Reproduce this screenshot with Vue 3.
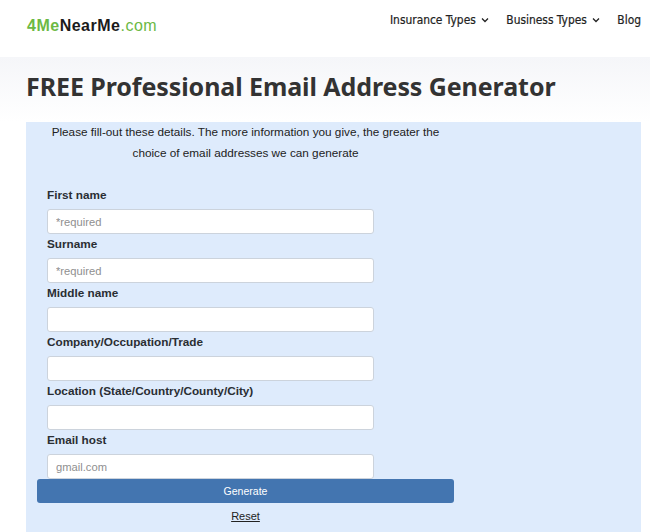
<script setup>
const fields = [
  { label: 'First name', placeholder: '*required' },
  { label: 'Surname', placeholder: '*required' },
  { label: 'Middle name', placeholder: '' },
  { label: 'Company/Occupation/Trade', placeholder: '' },
  { label: 'Location (State/Country/County/City)', placeholder: '' },
  { label: 'Email host', placeholder: 'gmail.com' },
]
</script>

<template>
  <div class="page">
    <header class="top">
      <div class="logo"><span class="g">4Me</span><span class="k">NearMe</span><span class="g dot">.com</span></div>
      <nav class="nav">
        <a class="item">Insurance Types
          <svg class="chev" width="8" height="6" viewBox="0 0 8 6"><path d="M1 1.5 L4 4.5 L7 1.5" fill="none" stroke="#222" stroke-width="1.3"/></svg>
        </a>
        <a class="item">Business Types
          <svg class="chev" width="8" height="6" viewBox="0 0 8 6"><path d="M1 1.5 L4 4.5 L7 1.5" fill="none" stroke="#222" stroke-width="1.3"/></svg>
        </a>
        <a class="item">Blog</a>
      </nav>
    </header>
    <section class="band">
      <h1>FREE Professional Email Address Generator</h1>
    </section>
    <main class="panel">
      <div class="narrow">
        <p class="intro">Please fill-out these details. The more information you give, the greater the<br>choice of email addresses we can generate</p>
        <form class="form" @submit.prevent>
          <div v-for="f in fields" :key="f.label" class="field">
            <label class="label">{{ f.label }}</label>
            <input class="input" type="text" :placeholder="f.placeholder">
          </div>
        </form>
        <button class="btn" type="button">Generate</button>
        <a class="reset">Reset</a>
      </div>
    </main>
  </div>
</template>

<style>
html, body { margin: 0; background: #fff; overflow: hidden; }
</style>

<style scoped>
.page { width: 650px; height: 532px; overflow: hidden; background: #fff; font-family: "Liberation Sans", Arial, sans-serif; }
.top { height: 57px; box-sizing: border-box; padding: 12px 9px 0 27px; display: flex; justify-content: space-between; align-items: flex-start; }
.logo { font-size: 16px; font-weight: 700; line-height: 28px; letter-spacing: 0.5px; }
.g { color: #6cb944; }
.k { color: #1b1b1b; }
.dot { font-weight: 400; }
.nav { display: flex; gap: 17.5px; font-family: "DejaVu Sans", sans-serif; font-stretch: condensed; font-size: 11.9px; color: #222; line-height: 16px; -webkit-text-stroke: 0.2px #222; }
.item { display: flex; align-items: center; gap: 5px; white-space: nowrap; }
.chev { flex: none; }
.band { height: 65px; box-sizing: border-box; padding: 12px 0 0 26px; background: linear-gradient(#f5f6f9, #fff); }
h1 { margin: 0; font-family: "Noto Sans", sans-serif; font-size: 25px; letter-spacing: -0.08px; font-weight: 700; line-height: 34px; color: #333; white-space: nowrap; }
.panel { display: flow-root; margin: 0 9px 0 26px; height: 410px; background: #deebfc; }
.narrow { width: 428px; padding-left: 11px; position: relative; }
.intro { margin: -1px 0 0; text-align: center; font-size: 11.75px; line-height: 21px; color: #222; width: 417px; }
.form { padding: 24px 0 0 10px; display: flex; flex-direction: column; }
.field { display: flex; flex-direction: column; height: 49px; }
.label { font-size: 11.75px; font-weight: 700; color: #2a2e33; line-height: 16px; margin-bottom: 6px; }
.input { width: 327px; height: 25px; box-sizing: border-box; border: 1px solid #ccd3dc; border-radius: 3px; background: #fff; padding: 0 8px; font-family: inherit; font-size: 11.2px; outline: none; }
.input::placeholder { color: #8f8f8f; opacity: 1; }
.btn { display: block; width: 417px; height: 24px; margin-top: -2px; position: relative; background: #4375b0; border: none; border-radius: 3px; color: #fff; font-family: inherit; font-size: 10.5px; padding: 0; }
.reset { display: block; width: 417px; margin-top: 6px; text-align: center; font-size: 11px; line-height: 14px; color: #222; text-decoration: underline; }
</style>
